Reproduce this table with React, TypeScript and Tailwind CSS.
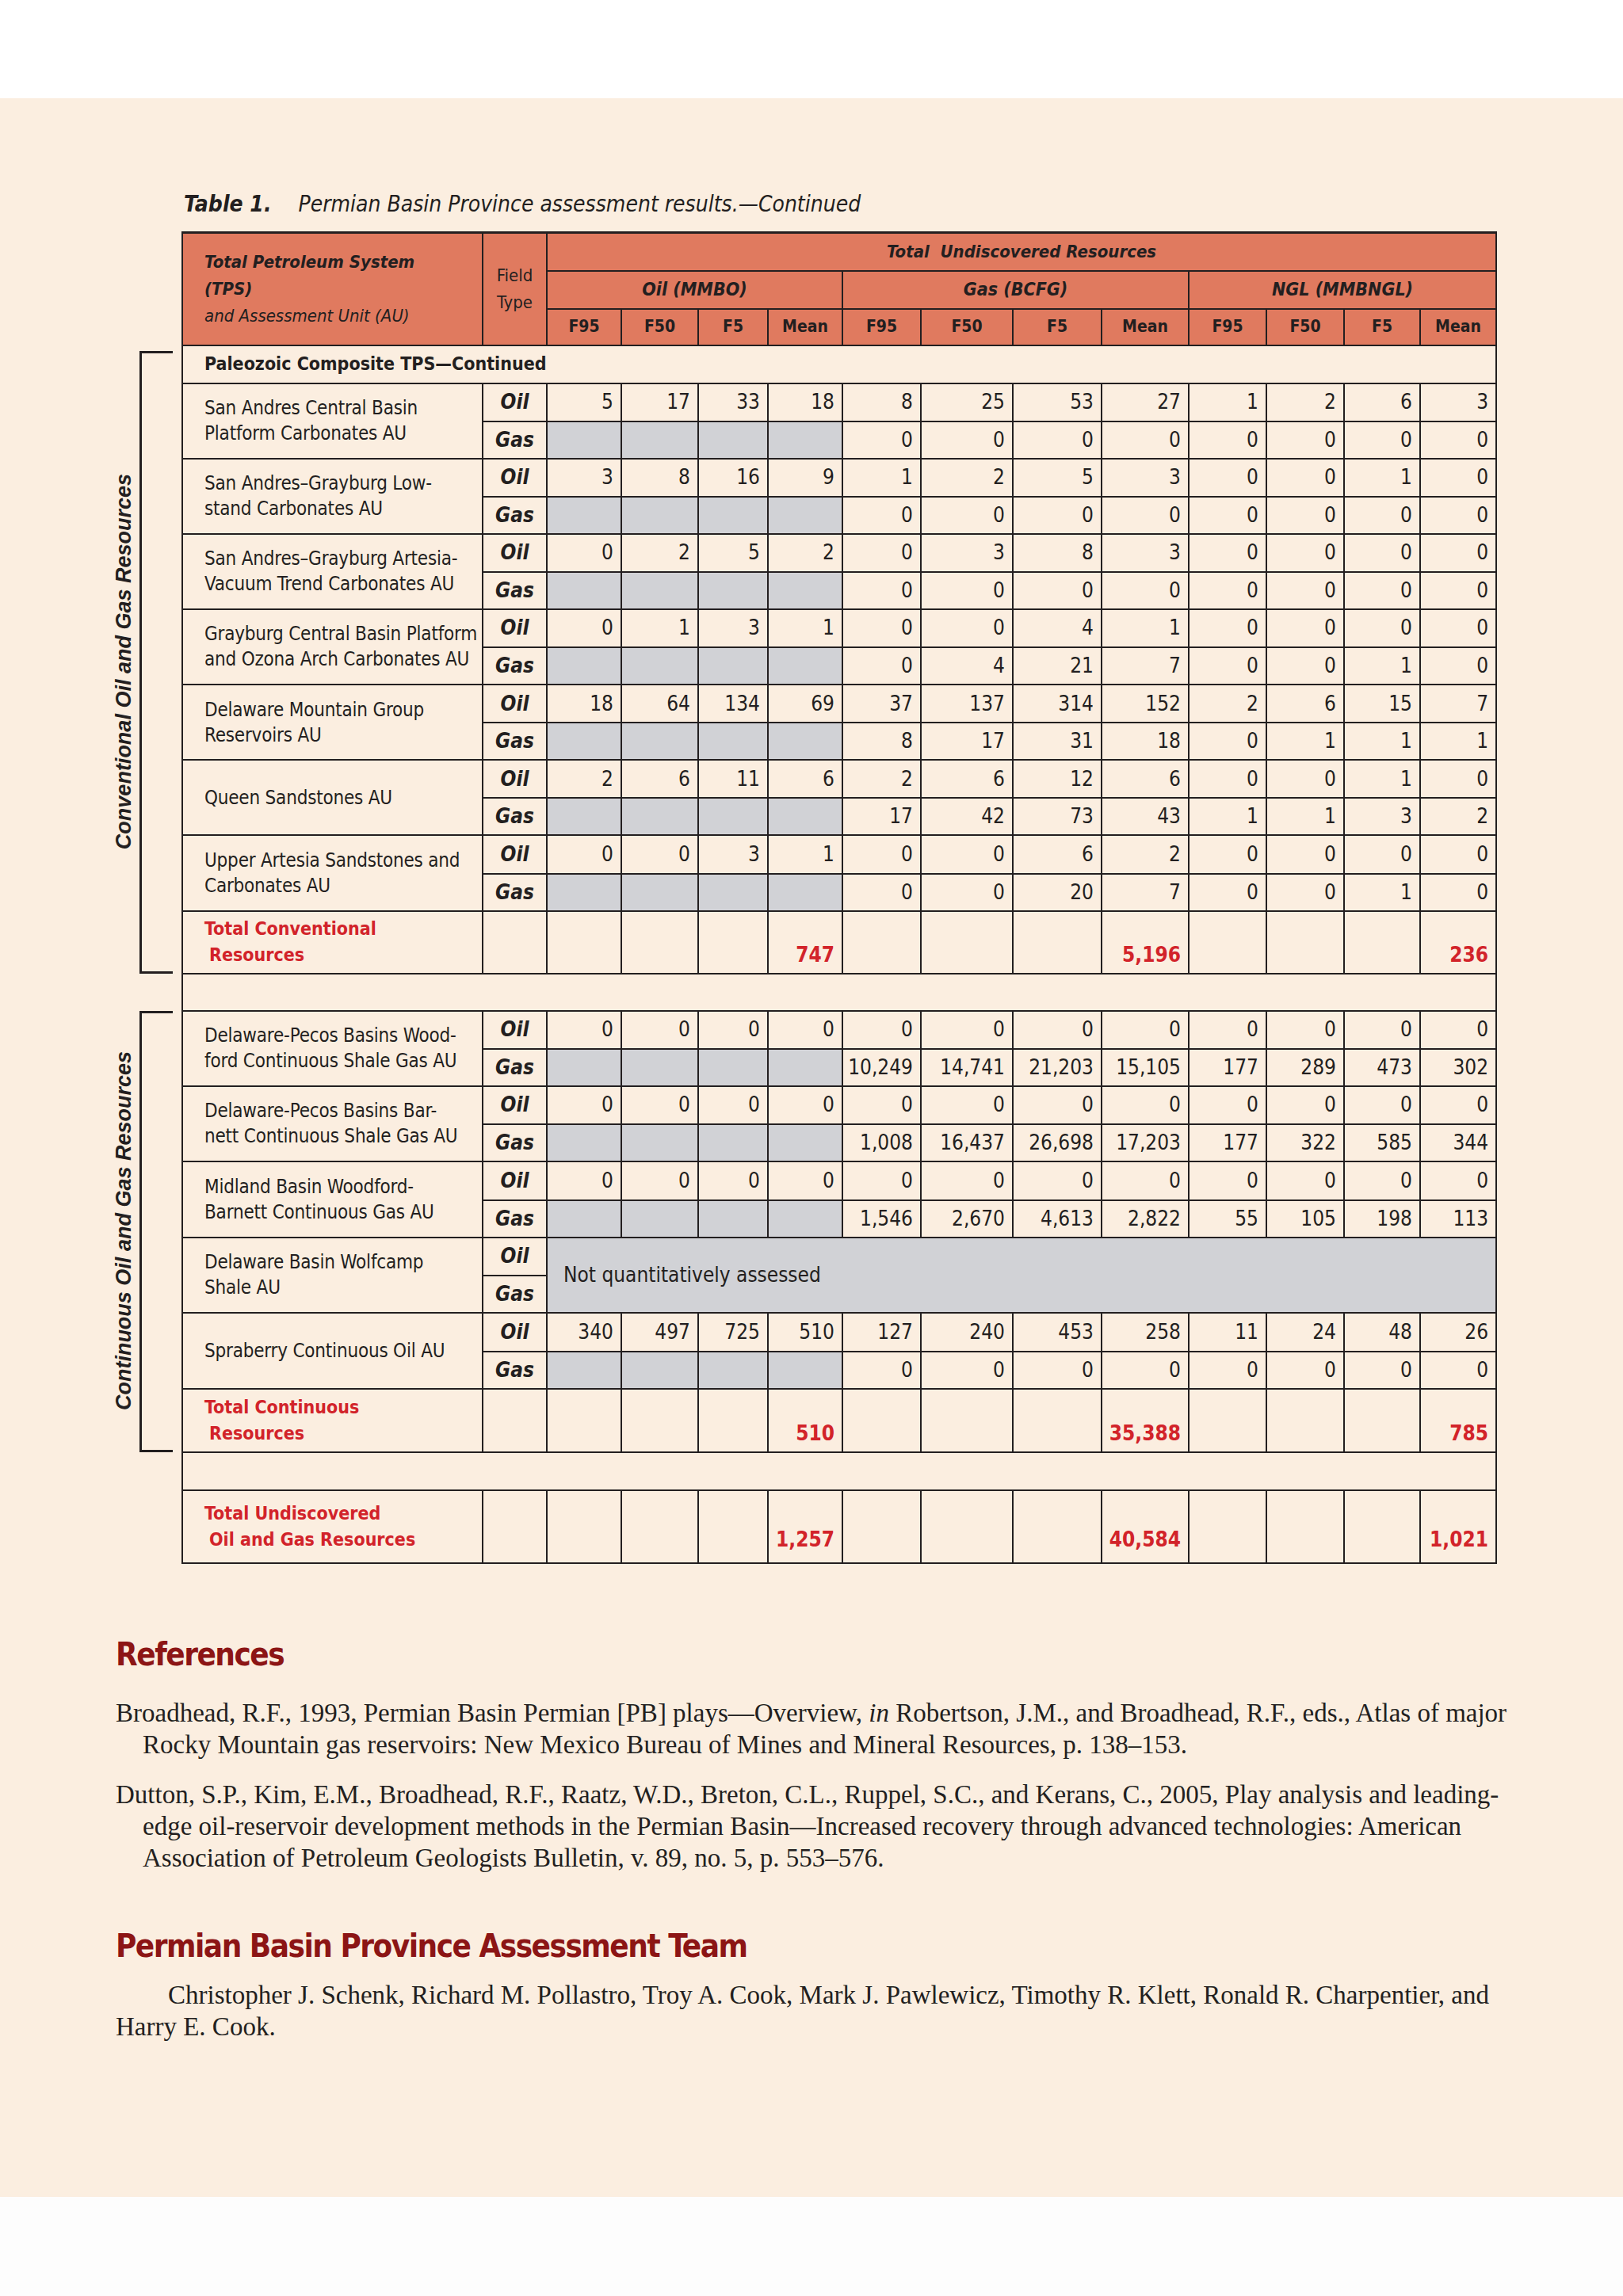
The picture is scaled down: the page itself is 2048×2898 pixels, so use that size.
import React from "react";

const narrow = "font-['Liberation_Sans_Narrow','Arial_Narrow','DejaVu_Sans_Condensed',sans-serif]";
const line = "border-2 border-[#231f20]";
const head = `${line} bg-[#e07a5f]`;
const gray = "bg-[#d1d2d6]";

type Row = (string | null)[];
type Unit = { name: string[]; oil: Row; gas: Row };

const G4: Row = [null, null, null, null];
const Z8: Row = ["0", "0", "0", "0", "0", "0", "0", "0"];
const Z12: Row = ["0", "0", "0", "0", ...Z8];

const conventional: Unit[] = [
  {
    name: ["San Andres Central Basin", "Platform Carbonates AU"],
    oil: ["5", "17", "33", "18", "8", "25", "53", "27", "1", "2", "6", "3"],
    gas: [...G4, ...Z8],
  },
  {
    name: ["San Andres–Grayburg Low-", "stand Carbonates AU"],
    oil: ["3", "8", "16", "9", "1", "2", "5", "3", "0", "0", "1", "0"],
    gas: [...G4, ...Z8],
  },
  {
    name: ["San Andres–Grayburg Artesia-", "Vacuum Trend Carbonates AU"],
    oil: ["0", "2", "5", "2", "0", "3", "8", "3", "0", "0", "0", "0"],
    gas: [...G4, ...Z8],
  },
  {
    name: ["Grayburg Central Basin Platform", "and Ozona Arch Carbonates AU"],
    oil: ["0", "1", "3", "1", "0", "0", "4", "1", "0", "0", "0", "0"],
    gas: [...G4, "0", "4", "21", "7", "0", "0", "1", "0"],
  },
  {
    name: ["Delaware Mountain Group", "Reservoirs AU"],
    oil: ["18", "64", "134", "69", "37", "137", "314", "152", "2", "6", "15", "7"],
    gas: [...G4, "8", "17", "31", "18", "0", "1", "1", "1"],
  },
  {
    name: ["Queen Sandstones AU"],
    oil: ["2", "6", "11", "6", "2", "6", "12", "6", "0", "0", "1", "0"],
    gas: [...G4, "17", "42", "73", "43", "1", "1", "3", "2"],
  },
  {
    name: ["Upper Artesia Sandstones and", "Carbonates AU"],
    oil: ["0", "0", "3", "1", "0", "0", "6", "2", "0", "0", "0", "0"],
    gas: [...G4, "0", "0", "20", "7", "0", "0", "1", "0"],
  },
];

const continuous: Unit[] = [
  {
    name: ["Delaware-Pecos Basins Wood-", "ford Continuous Shale Gas AU"],
    oil: Z12,
    gas: [...G4, "10,249", "14,741", "21,203", "15,105", "177", "289", "473", "302"],
  },
  {
    name: ["Delaware-Pecos Basins Bar-", "nett Continuous Shale Gas AU"],
    oil: Z12,
    gas: [...G4, "1,008", "16,437", "26,698", "17,203", "177", "322", "585", "344"],
  },
  {
    name: ["Midland Basin Woodford-", "Barnett Continuous Gas AU"],
    oil: Z12,
    gas: [...G4, "1,546", "2,670", "4,613", "2,822", "55", "105", "198", "113"],
  },
  {
    name: ["Delaware Basin Wolfcamp", "Shale AU"],
    oil: [],
    gas: [],
  },
  {
    name: ["Spraberry Continuous Oil AU"],
    oil: ["340", "497", "725", "510", "127", "240", "453", "258", "11", "24", "48", "26"],
    gas: [...G4, ...Z8],
  },
];

const Values = ({ row }: { row: Row }) => (
  <>
    {row.map((v, i) =>
      v === null ? (
        <td key={i} className={`${line} ${gray}`} />
      ) : (
        <td key={i} className={`${line} text-right pr-[9px] align-middle`}>
          {v}
        </td>
      )
    )}
  </>
);

const Label = ({ name }: { name: string[] }) => (
  <td
    rowSpan={2}
    className={`${line} pl-[27px] align-middle text-[24px] tracking-[-0.2px] leading-[32px] whitespace-nowrap`}
  >
    {name.map((n, i) => (
      <div key={i}>{n}</div>
    ))}
  </td>
);

const UnitRows = ({ unit }: { unit: Unit }) => {
  const wolfcamp = unit.oil.length === 0;
  return (
    <>
      <tr className="h-[48px]">
        <Label name={unit.name} />
        <td className={`${line} text-center font-bold italic`}>Oil</td>
        {wolfcamp ? (
          <td colSpan={12} rowSpan={2} className={`${line} ${gray} pl-[20px] align-middle`}>
            Not quantitatively assessed
          </td>
        ) : (
          <Values row={unit.oil} />
        )}
      </tr>
      <tr className="h-[47px]">
        <td className={`${line} text-center font-bold italic`}>Gas</td>
        {!wolfcamp && <Values row={unit.gas} />}
      </tr>
    </>
  );
};

const TotalRow = ({ title, sub, values, h }: { title: string; sub: string; values: string[]; h: string }) => (
  <tr className={h}>
    <td className={`${line} pl-[27px] align-middle font-bold text-[23px] text-[#d2232a] leading-[33px]`}>
      <div>{title}</div>
      <div className="pl-[6px]">{sub}</div>
    </td>
    <td className={line} />
    {[0, 1, 2].map((g) => (
      <React.Fragment key={g}>
        <td className={line} />
        <td className={line} />
        <td className={line} />
        <td className={`${line} text-right pr-[9px] pt-[33px] leading-[33px] align-middle font-bold text-[#d2232a]`}>
          {values[g]}
        </td>
      </React.Fragment>
    ))}
  </tr>
);

const Bracket = ({ label, box }: { label: string; box: string }) => (
  <div className={`flex items-center ${box}`}>
    <div className="w-[20px] flex justify-center">
      <span className="[writing-mode:vertical-rl] rotate-180 font-['Liberation_Sans',sans-serif] font-bold italic text-[27px] leading-[24px] whitespace-nowrap text-[#231f20]">
        {label}
      </span>
    </div>
    <div className="ml-[10px] self-stretch w-[42px] border-[3px] border-r-0 border-[#231f20]" />
  </div>
);

const subHeads = ["F95", "F50", "F5", "Mean"];

export default function App() {
  return (
    <div className="w-[2048px] h-[2898px] bg-white flex flex-col text-[#231f20]">
      <div className="h-[124px] shrink-0" />
      <div className="h-[2649px] shrink-0 bg-[#fbeee0] pl-[146px] pt-[118px]">
        <p className={`${narrow} text-[28px] leading-[32px] ml-[86px]`}>
          <span className="font-bold italic">Table 1.</span>
          <span className="italic ml-[34px]">Permian Basin Province assessment results.—Continued</span>
        </p>

        <table className={`${narrow} mt-[18px] border-collapse table-fixed w-[1742px] text-[26px]`}>
          <colgroup>
            <col className="w-[84px]" />
            <col className="w-[379px]" />
            <col className="w-[81px]" />
            <col className="w-[94px]" />
            <col className="w-[97px]" />
            <col className="w-[88px]" />
            <col className="w-[94px]" />
            <col className="w-[99px]" />
            <col className="w-[116px]" />
            <col className="w-[112px]" />
            <col className="w-[110px]" />
            <col className="w-[98px]" />
            <col className="w-[98px]" />
            <col className="w-[96px]" />
            <col className="w-[96px]" />
          </colgroup>
          <tbody>
            <tr className="h-[48px]">
              <td rowSpan={3} className="p-0" />
              <td rowSpan={3} className={`${head} border-t-[3px] pl-[27px] align-middle text-[22px] leading-[34px]`}>
                <div className="font-bold italic">Total Petroleum System</div>
                <div className="font-bold italic">(TPS)</div>
                <div className="italic">and Assessment Unit (AU)</div>
              </td>
              <td rowSpan={3} className={`${head} border-t-[3px] text-center align-middle text-[22px] leading-[34px]`}>
                Field
                <br />
                Type
              </td>
              <td colSpan={12} className={`${head} border-t-[3px] text-center font-bold italic text-[22px] whitespace-pre`}>
                {"Total  Undiscovered Resources"}
              </td>
            </tr>
            <tr className="h-[48px]">
              <td colSpan={4} className={`${head} text-center font-bold italic text-[23px]`}>Oil (MMBO)</td>
              <td colSpan={4} className={`${head} text-center font-bold italic text-[23px]`}>Gas (BCFG)</td>
              <td colSpan={4} className={`${head} text-center font-bold italic text-[23px]`}>NGL (MMBNGL)</td>
            </tr>
            <tr className="h-[46px]">
              {[0, 1, 2].map((g) =>
                subHeads.map((s) => (
                  <td key={`${g}${s}`} className={`${head} text-center font-bold text-[21px]`}>
                    {s}
                  </td>
                ))
              )}
            </tr>

            <tr className="h-[48px]">
              <td rowSpan={16} className="p-0 align-top">
                <Bracket label="Conventional Oil and Gas Resources" box="mt-[7px] h-[786px]" />
              </td>
              <td colSpan={14} className={`${line} pl-[27px] font-bold text-[23px] align-middle`}>
                Paleozoic Composite TPS—Continued
              </td>
            </tr>
            {conventional.map((u) => (
              <UnitRows key={u.name.join()} unit={u} />
            ))}
            <TotalRow title="Total Conventional" sub="Resources" values={["747", "5,196", "236"]} h="h-[79px]" />

            <tr className="h-[47px]">
              <td className="p-0" />
              <td colSpan={14} className={line} />
            </tr>

            <tr className="h-[48px]">
              <td rowSpan={11} className="p-0 align-top">
                <Bracket label="Continuous Oil and Gas Resources" box="mt-[0px] h-[557px]" />
              </td>
              <Label name={continuous[0].name} />
              <td className={`${line} text-center font-bold italic`}>Oil</td>
              <Values row={continuous[0].oil} />
            </tr>
            <tr className="h-[47px]">
              <td className={`${line} text-center font-bold italic`}>Gas</td>
              <Values row={continuous[0].gas} />
            </tr>
            {continuous.slice(1).map((u) => (
              <UnitRows key={u.name.join()} unit={u} />
            ))}
            <TotalRow title="Total Continuous" sub="Resources" values={["510", "35,388", "785"]} h="h-[80px]" />

            <tr className="h-[48px]">
              <td rowSpan={2} className="p-0" />
              <td colSpan={14} className={line} />
            </tr>
            <TotalRow
              title="Total Undiscovered"
              sub="Oil and Gas Resources"
              values={["1,257", "40,584", "1,021"]}
              h="h-[92px]"
            />
          </tbody>
        </table>

        <h2 className={`${narrow} mt-[88px] text-[40px] tracking-[-1.5px] leading-[52px] font-bold text-[#8c1515]`}>
          References
        </h2>
        <div className="font-['Liberation_Serif',serif] text-[33px] leading-[40px] text-[#231f20]">
          <p className="mt-[28px] pl-[34px] -indent-[34px] whitespace-nowrap">
            Broadhead, R.F., 1993, Permian Basin Permian [PB] plays—Overview, <i>in</i> Robertson, J.M., and Broadhead,
            R.F., eds., Atlas of major
            <br />
            Rocky Mountain gas reservoirs: New Mexico Bureau of Mines and Mineral Resources, p. 138–153.
          </p>
          <p className="mt-[23px] pl-[34px] -indent-[34px] whitespace-nowrap">
            Dutton, S.P., Kim, E.M., Broadhead, R.F., Raatz, W.D., Breton, C.L., Ruppel, S.C., and Kerans, C., 2005, Play
            analysis and leading-
            <br />
            edge oil-reservoir development methods in the Permian Basin—Increased recovery through advanced technologies:
            American
            <br />
            Association of Petroleum Geologists Bulletin, v. 89, no. 5, p. 553–576.
          </p>
        </div>

        <h2 className={`${narrow} mt-[65px] text-[40px] tracking-[-1.5px] leading-[52px] font-bold text-[#8c1515]`}>
          Permian Basin Province Assessment Team
        </h2>
        <p className="mt-[16px] font-['Liberation_Serif',serif] text-[33px] leading-[40px] indent-[66px] whitespace-nowrap">
          Christopher J. Schenk, Richard M. Pollastro, Troy A. Cook, Mark J. Pawlewicz, Timothy R. Klett, Ronald R.
          Charpentier, and
          <br />
          Harry E. Cook.
        </p>
      </div>
      <div className="flex-1 bg-[#fdfdfd]" />
    </div>
  );
}
